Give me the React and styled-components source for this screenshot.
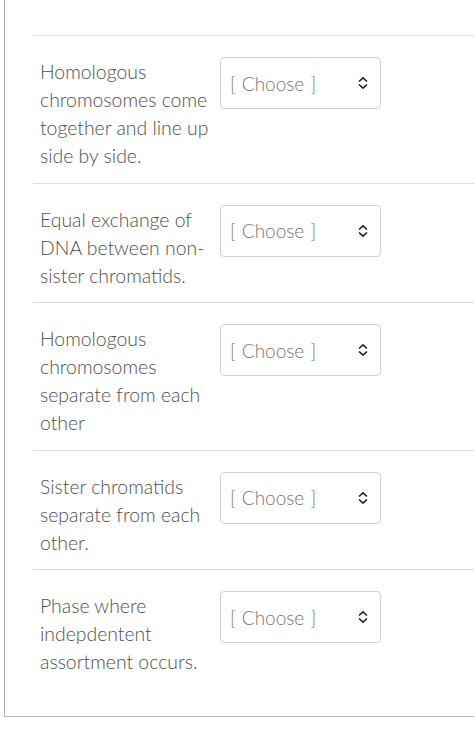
import React from 'react'
import styled, { createGlobalStyle } from 'styled-components'

const GlobalStyle = createGlobalStyle`
    body {
        margin: 0;
        background: #fff;
        font-family: Lato, "Open Sans", sans-serif;
    }
`

const items = [
    'Homologous chromosomes come together and line up side by side.',
    'Equal exchange of DNA between non-sister chromatids.',
    'Homologous chromosomes separate from each other',
    'Sister chromatids separate from each other.',
    'Phase where indepdentent assortment occurs.',
]

function App() {
    return (
        <Page>
            <GlobalStyle />
            <Panel>
                <List>
                    {items.map((text, i) => (
                        <Row key={i} last={i === items.length - 1}>
                            <Prompt>{text}</Prompt>
                            <Select>
                                <span>[ Choose ]</span>
                                <Chevron viewBox="0 0 12 14">
                                    <path d="M2 5.5 L6 1.8 L10 5.5 M2 8.5 L6 12.2 L10 8.5" />
                                </Chevron>
                            </Select>
                        </Row>
                    ))}
                </List>
            </Panel>
        </Page>
    )
}

const Page = styled.div`
    width: 474px;
    height: 735px;
    overflow: hidden;
`

const Panel = styled.div`
    margin-left: 4px;
    width: 480px;
    border-left: 1.5px solid #b4b4b4;
    border-bottom: 1.5px solid #b4b4b4;
    padding-top: 35px;
    padding-left: 28px;
`

const List = styled.div`
    display: flex;
    flex-direction: column;
`

const Row = styled.div`
    display: flex;
    align-items: flex-start;
    border-top: 1px solid #dedede;
    padding: 22px 0 ${props => props.last ? '40px' : '12.5px'} 7px;
`

const Prompt = styled.div`
    width: 176px;
    font-size: 19.4px;
    font-weight: 300;
    line-height: 28px;
    color: #4f4f4f;
`

const Select = styled.div`
    margin-left: 4px;
    margin-top: -1px;
    width: 161px;
    height: 52px;
    box-sizing: border-box;
    border: 1.5px solid #cfd3d6;
    border-radius: 4px;
    display: flex;
    align-items: center;
    justify-content: space-between;
    padding: 0 11px 0 9px;
    span {
        font-size: 19px;
        font-weight: 300;
        color: #777;
        word-spacing: 1px;
    }
`

const Chevron = styled.svg`
    width: 12px;
    height: 14px;
    fill: none;
    stroke: #222;
    stroke-width: 1.6;
`

export default App
